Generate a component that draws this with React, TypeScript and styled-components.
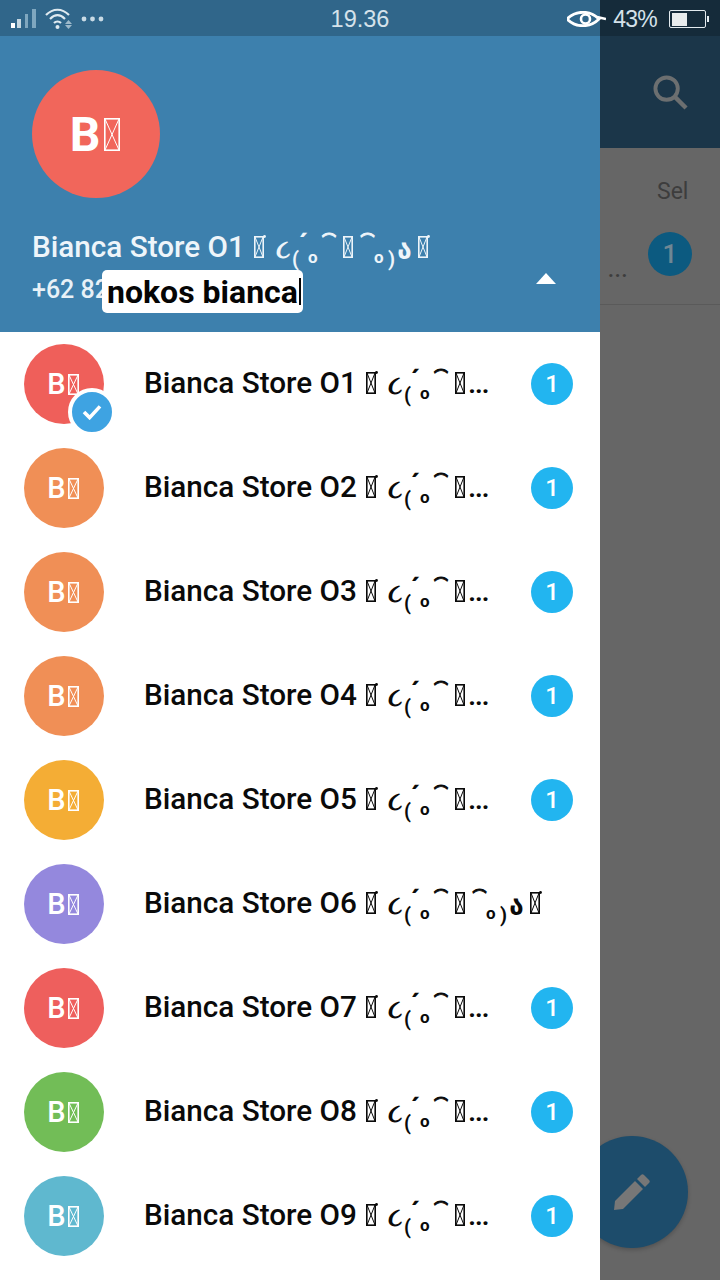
import React, { FC } from 'react';
import styled, { createGlobalStyle } from 'styled-components';

const GlobalStyle = createGlobalStyle`
  html, body {
    margin: 0;
    padding: 0;
    background: #666;
  }
  * {
    box-sizing: border-box;
  }
`;

const Screen = styled.div`
  position: relative;
  width: 720px;
  height: 1280px;
  overflow: hidden;
  background: #666666;
  font-family: Roboto, 'Noto Sans', 'DejaVu Sans', sans-serif;
`;

const StatusBar = styled.div`
  position: absolute;
  top: 0;
  left: 0;
  right: 0;
  height: 36px;
  z-index: 3;
  display: grid;
  grid-template-columns: 1fr auto 1fr;
  align-items: center;
  padding: 0 11px 0 11px;
  background: rgba(0, 0, 0, 0.2);
  color: #d5e2ea;
`;

const StatusLeft = styled.div`
  display: flex;
  align-items: center;
  gap: 9px;
`;

const StatusRight = styled.div`
  display: flex;
  align-items: center;
  justify-content: flex-end;
`;

const Clock = styled.span`
  font-family: 'Liberation Sans', Arial, sans-serif;
  font-size: 23.5px;
  line-height: 38px;
`;

const Percent = styled.span`
  font-family: 'Liberation Sans', Arial, sans-serif;
  font-size: 23px;
  letter-spacing: -0.8px;
  margin: 0 12px 0 7px;
`;

const Main = styled.div`
  display: flex;
  flex-direction: column;
  height: 100%;
`;

const Toolbar = styled.div`
  height: 148px;
  flex: none;
  display: flex;
  align-items: center;
  justify-content: flex-end;
  padding: 36px 32px 0 0;
  background: #1b3649;
`;

const ChatRow = styled.div`
  position: relative;
  height: 157px;
  padding: 32px 0 0 657px;
  border-bottom: 1px solid #5a5a5a;
`;

const ChatDate = styled.div`
  font-size: 23px;
  line-height: 24px;
  color: #3d3d3d;
  white-space: nowrap;
`;

const ChatBadge = styled.div`
  position: absolute;
  left: 648px;
  top: 84px;
  width: 44px;
  height: 44px;
  border-radius: 50%;
  display: flex;
  align-items: center;
  justify-content: center;
  background: #0c5a80;
  color: #6f8794;
  font-size: 26px;
  font-weight: 500;
`;

const ChatDots = styled.div`
  position: absolute;
  left: 608px;
  top: 110px;
  color: #3d3d3d;
  font-size: 20px;
  font-weight: 700;
  line-height: 24px;
  letter-spacing: 1px;
`;

const Fab = styled.div`
  position: absolute;
  right: 32px;
  bottom: 32px;
  width: 112px;
  height: 112px;
  border-radius: 50%;
  display: flex;
  align-items: center;
  justify-content: center;
  background: #1d4c6b;
  box-shadow: 0 2px 4px rgba(0, 0, 0, 0.2);
`;

const Drawer = styled.div`
  position: absolute;
  top: 0;
  left: 0;
  bottom: 0;
  z-index: 2;
  width: 600px;
  display: flex;
  flex-direction: column;
  background: #ffffff;
`;

const Header = styled.div`
  height: 332px;
  flex: none;
  padding: 70px 44px 0 32px;
  background: #3d80ad;
  color: #ffffff;
`;

const HeaderAvatar = styled.div`
  width: 128px;
  height: 128px;
  border-radius: 50%;
  display: flex;
  align-items: center;
  justify-content: center;
  gap: 4px;
  background: #f1665b;
  font-size: 48px;
  font-weight: 700;
`;

const HeaderName = styled.div`
  display: flex;
  align-items: center;
  margin-top: 29px;
  height: 38px;
  font-size: 29.7px;
  font-weight: 500;
  color: #eef5fa;
  white-space: nowrap;
`;

const PhoneRow = styled.div`
  position: relative;
  display: flex;
  align-items: center;
  justify-content: space-between;
  height: 40px;
  margin-top: 4px;
  font-size: 25px;
  font-weight: 500;
  color: #e8f1f7;
`;

const Arrow = styled.div`
  width: 0;
  height: 0;
  margin-bottom: 22px;
  border-left: 10px solid transparent;
  border-right: 10px solid transparent;
  border-bottom: 11px solid #ffffff;
`;

const Label = styled.div`
  position: absolute;
  left: 70px;
  top: 1px;
  width: 201px;
  height: 43px;
  border-radius: 5px;
  display: flex;
  align-items: center;
  padding-left: 5px;
  background: #ffffff;
  color: #050505;
  font-size: 32px;
  font-weight: 700;
  white-space: nowrap;
`;

const Cursor = styled.span`
  width: 2px;
  height: 27px;
  margin-left: 1px;
  background: #050505;
`;

const Row = styled.div`
  height: 104px;
  flex: none;
  display: flex;
  align-items: center;
  padding: 0 27px 0 24px;
`;

const Avatar = styled.div<{ $color: string }>`
  position: relative;
  width: 80px;
  height: 80px;
  flex: none;
  border-radius: 50%;
  display: flex;
  align-items: center;
  justify-content: center;
  gap: 2px;
  background: ${({ $color }) => $color};
  color: #ffffff;
  font-size: 29px;
  font-weight: 500;
`;

const Check = styled.div`
  position: absolute;
  right: -12px;
  bottom: -12px;
  width: 48px;
  height: 48px;
  border: 4px solid #ffffff;
  border-radius: 50%;
  display: flex;
  align-items: center;
  justify-content: center;
  background: #3ea3e2;
`;

const Title = styled.div`
  flex: 1;
  display: flex;
  align-items: center;
  margin-left: 40px;
  padding-bottom: 4px;
  font-size: 29.7px;
  font-weight: 500;
  color: #0a0a0a;
  white-space: nowrap;
`;

const Glyph = styled.span<{ $w: number; $gap: number; $dy: number; $size: number; $stroke: number }>`
  flex: none;
  display: inline-flex;
  justify-content: center;
  width: ${({ $w }) => $w}px;
  margin-left: ${({ $gap }) => $gap}px;
  transform: translateY(${({ $dy }) => $dy}px);
  font-family: Roboto, 'DejaVu Sans', 'Noto Sans CJK JP', sans-serif;
  font-size: ${({ $size }) => $size}px;
  font-weight: 700;
  line-height: 30px;
  -webkit-text-stroke: ${({ $stroke }) => $stroke}px currentColor;
`;

const Ellipsis = styled.span`
  margin-left: 1px;
  letter-spacing: -1.5px;
`;

const Badge = styled.div`
  width: 42px;
  height: 42px;
  flex: none;
  border-radius: 50%;
  display: flex;
  align-items: center;
  justify-content: center;
  background: #22b5f0;
  color: #ffffff;
  font-size: 24px;
  font-weight: 500;
`;

const TofuBox = styled.svg<{ $gap: number }>`
  flex: none;
  margin-left: ${({ $gap }) => $gap}px;
`;

const Tofu: FC<{ width?: number; height?: number; gap?: number; dot?: boolean }> = ({
  width = 10,
  height = 23,
  gap = 0,
  dot,
}) => (
  <TofuBox
    $gap={gap}
    width={width + 2}
    height={height}
    viewBox={`0 0 ${width + 2} ${height}`}
    fill="none"
    stroke="currentColor"
    strokeWidth={1.6}
  >
    <rect x={0.8} y={1.8} width={width - 1.6} height={height - 2.6} />
    <path d={`M1 2L${width - 1} ${height - 1}M${width - 1} 2L1 ${height - 1}`} strokeWidth={1} />
    {dot && <circle cx={width + 0.5} cy={1.5} r={1.4} fill="currentColor" stroke="none" />}
  </TofuBox>
);

const faceStart = [
  { text: '૮', w: 13, gap: 11, dy: 3, size: 26, stroke: 0 },
  { text: '(', w: 7, gap: 2, dy: 13, size: 20, stroke: 0 },
  { text: '´', w: 9, gap: 0, dy: -1, size: 28, stroke: 0 },
  { text: 'o', w: 10, gap: 0, dy: 11, size: 17, stroke: 0 },
  { text: '⌒', w: 12, gap: 5, dy: -6, size: 14, stroke: 0.9 },
];

const faceEnd = [
  { text: '⌒', w: 11, gap: 7, dy: -6, size: 14, stroke: 0.9 },
  { text: 'o', w: 10, gap: 1, dy: 11, size: 17, stroke: 0 },
  { text: ')', w: 7, gap: 4, dy: 13, size: 20, stroke: 0 },
  { text: 'ა', w: 17, gap: 1, dy: 4, size: 26, stroke: 0 },
];

const FaceGlyphs: FC<{ glyphs: typeof faceStart }> = ({ glyphs }) => (
  <>
    {glyphs.map((g, i) => (
      <Glyph key={i} $w={g.w} $gap={g.gap} $dy={g.dy} $size={g.size} $stroke={g.stroke}>
        {g.text}
      </Glyph>
    ))}
  </>
);

// the face is the same everywhere, only the tail differs between full and cut names
const Face: FC<{ full?: boolean }> = ({ full }) => (
  <>
    <Tofu gap={9} dot />
    <FaceGlyphs glyphs={faceStart} />
    <Tofu gap={8} />
    {full ? (
      <>
        <FaceGlyphs glyphs={faceEnd} />
        <Tofu gap={5} dot />
      </>
    ) : (
      <Ellipsis>...</Ellipsis>
    )}
  </>
);

const stores = [
  { name: 'Bianca Store O1', color: '#ef5f5a', active: true, count: 1 },
  { name: 'Bianca Store O2', color: '#f08f56', count: 1 },
  { name: 'Bianca Store O3', color: '#f08f56', count: 1 },
  { name: 'Bianca Store O4', color: '#f08f56', count: 1 },
  { name: 'Bianca Store O5', color: '#f4ad35', count: 1 },
  { name: 'Bianca Store O6', color: '#9488dd', count: 0 },
  { name: 'Bianca Store O7', color: '#ee5f5d', count: 1 },
  { name: 'Bianca Store O8', color: '#72bd57', count: 1 },
  { name: 'Bianca Store O9', color: '#5fb8cf', count: 1 },
];

const App: FC = () => {
  return (
    <Screen>
      <GlobalStyle />
      <StatusBar>
        <StatusLeft>
          <svg width={25} height={20} viewBox="0 0 25 20">
            <rect x={0} y={14} width={4} height={5} fill="#ffffff" />
            <rect x={6} y={10} width={4} height={9} fill="#c3d6e1" />
            <rect x={14} y={5} width={3} height={14} fill="#7fa7bf" />
            <rect x={21} y={0} width={4} height={19} fill="#7fa7bf" />
          </svg>
          <svg width={27} height={22} viewBox="0 0 27 22" fill="none" stroke="#dfeaf0" strokeWidth={2.2}>
            <path d="M1 7C8 0 17 0 24 7" />
            <path d="M5 11C10 6 15 6 20 11" />
            <path d="M9 15C11 13 14 13 16 15" />
            <circle cx={12.5} cy={19} r={2} fill="#dfeaf0" stroke="none" />
            <path d="M20 16L27 16L23.5 12Z" fill="#9db9ca" stroke="none" />
            <path d="M20 17L27 17L23.5 21Z" fill="#9db9ca" stroke="none" />
          </svg>
          <svg width={23} height={6} viewBox="0 0 23 6" fill="#c9dbe5">
            <circle cx={3} cy={3} r={2.4} />
            <circle cx={11.5} cy={3} r={2.4} />
            <circle cx={20} cy={3} r={2.4} />
          </svg>
        </StatusLeft>
        <Clock>19.36</Clock>
        <StatusRight>
          <svg width={39} height={16} viewBox="0 0 39 16" fill="none" stroke="#ffffff">
            <path d="M0 8C9 -1 23 -1 32 8C23 17 9 17 0 8Z" strokeWidth={2.8} />
            <circle cx={18.5} cy={8} r={4.5} strokeWidth={2.6} />
            <path d="M30 6L39 8" strokeWidth={2.6} />
          </svg>
          <Percent>43%</Percent>
          <svg width={40} height={19} viewBox="0 0 40 19" fill="none">
            <rect x={0.5} y={0.5} width={36} height={17} rx={1.5} stroke="#e3ebef" />
            <rect x={3} y={3} width={15} height={13} fill="#e8eced" />
            <rect x={38} y={6} width={2} height={6} fill="#e3ebef" />
          </svg>
        </StatusRight>
      </StatusBar>

      <Main>
        <Toolbar>
          <svg width={35} height={35} viewBox="0 0 36 36" fill="none" stroke="#6c6f70" strokeWidth={4}>
            <circle cx={14} cy={14} r={11.5} />
            <path d="M22 22L34 34" strokeWidth={4.5} />
          </svg>
        </Toolbar>
        <ChatRow>
          <ChatDate>Sel</ChatDate>
          <ChatBadge>1</ChatBadge>
          <ChatDots>...</ChatDots>
        </ChatRow>
      </Main>
      <Fab>
        <svg width={38} height={38} viewBox="0 0 38 38" fill="#777777">
          <path d="M1 37L2 28L22 8L30 16L10 36Z" />
          <path d="M24 6L28 2C29 1 30 1 31 2L36 7C37 8 37 9 36 10L32 14Z" />
        </svg>
      </Fab>

      <Drawer>
        <Header>
          <HeaderAvatar>
            B
            <Tofu width={16} height={34} />
          </HeaderAvatar>
          <HeaderName>
            Bianca Store O1
            <Face full />
          </HeaderName>
          <PhoneRow>
            <span>+62 82</span>
            <Arrow />
            <Label>
              nokos bianca
              <Cursor />
            </Label>
          </PhoneRow>
        </Header>
        {stores.map(store => (
          <Row key={store.name}>
            <Avatar $color={store.color}>
              B
              <Tofu width={11} height={22} />
              {store.active && (
                <Check>
                  <svg width={20} height={16} viewBox="0 0 24 20" fill="none" stroke="#ffffff" strokeWidth={4.5}>
                    <path d="M2 10L9 17L22 3" />
                  </svg>
                </Check>
              )}
            </Avatar>
            <Title>
              {store.name}
              <Face full={store.count === 0} />
            </Title>
            {store.count > 0 && <Badge>{store.count}</Badge>}
          </Row>
        ))}
      </Drawer>
    </Screen>
  );
};

export default App;
